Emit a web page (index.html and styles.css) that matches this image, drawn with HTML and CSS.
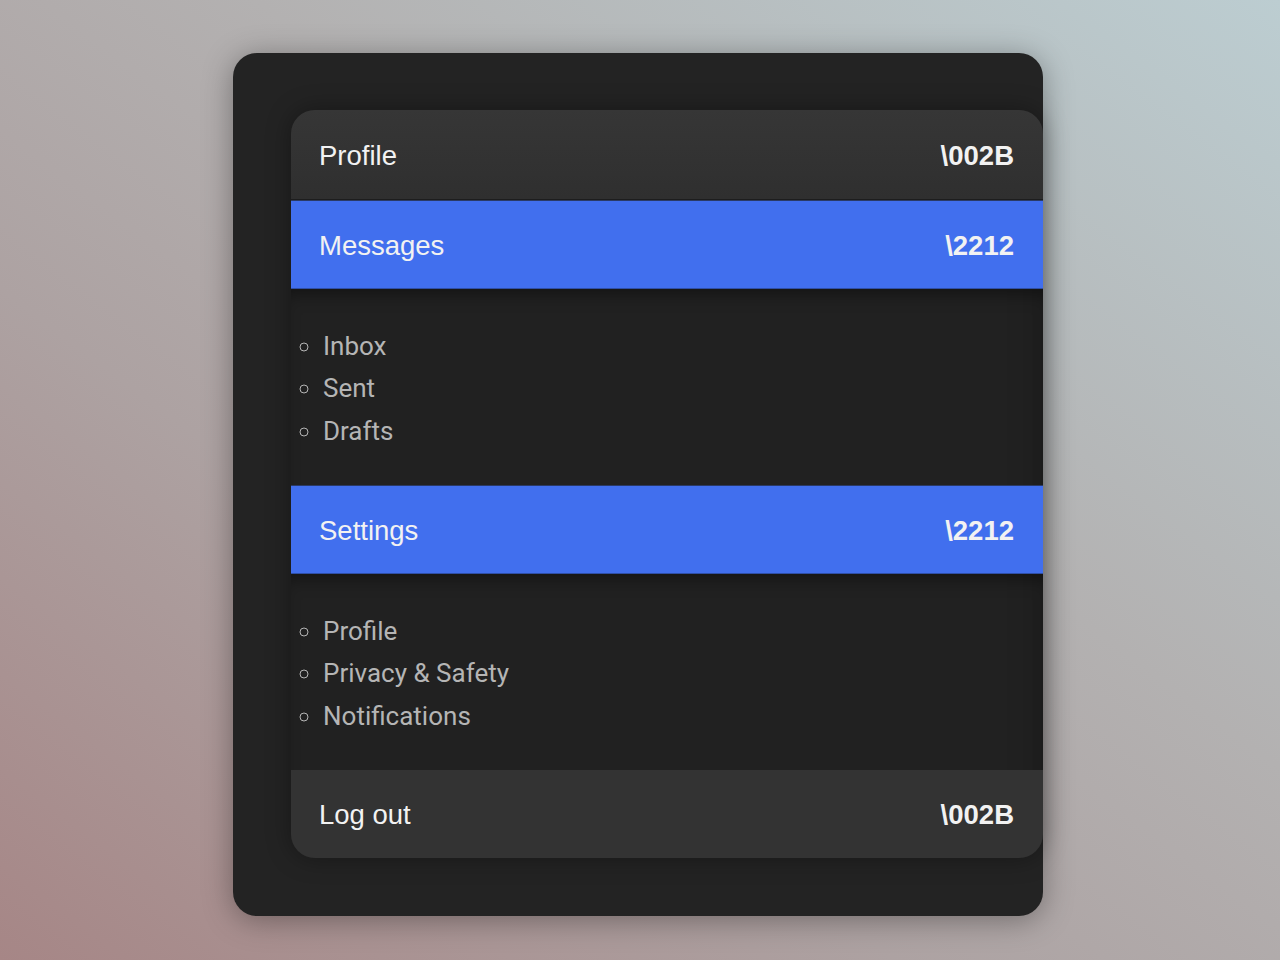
FILE: index.html
```html
<!DOCTYPE html>
<html lang="en">
<head>
    <meta charset="UTF-8">
    <meta name="viewport" content="width=device-width, initial-scale=1.0">
    <title>Accordion</title>
    <link rel="stylesheet" href="styles.css">
</head>
<body>
    <div class="card">
        <div class="accordion">
            <div class="accordion__item">
                <div class="accordion__header accordion__header--top">
                    <span>Profile</span>
                    <span class="accordion__mark">\002B</span>
                </div>
            </div>
            <div class="accordion__item">
                <div class="accordion__header accordion__header--open">
                    <span>Messages</span>
                    <span class="accordion__mark">\2212</span>
                </div>
                <ul class="accordion__content">
                    <li>Inbox</li>
                    <li>Sent</li>
                    <li>Drafts</li>
                </ul>
            </div>
            <div class="accordion__item">
                <div class="accordion__header accordion__header--open">
                    <span>Settings</span>
                    <span class="accordion__mark">\2212</span>
                </div>
                <ul class="accordion__content">
                    <li>Profile</li>
                    <li>Privacy &amp; Safety</li>
                    <li>Notifications</li>
                </ul>
            </div>
            <div class="accordion__item">
                <div class="accordion__header accordion__header--bottom">
                    <span>Log out</span>
                    <span class="accordion__mark">\002B</span>
                </div>
            </div>
        </div>
    </div>
</body>
</html>
```

FILE: styles.css
```css
html, body{
    height: 100%;
}
body{
    margin: 0;
    display: flex;
    justify-content: center;
    align-items: flex-start;
    background: linear-gradient(to top right, #a68686 0%, #ada2a2 35%, #b3b1b1 60%, #bccdd1 100%);
    font-family: "Liberation Sans", Arial, sans-serif;
}
.card{
    margin-top: 53px;
    margin-right: 4px;
    width: 810px;
    box-sizing: border-box;
    padding: 57px 0 58px 58px;
    background-color: #232323;
    border-radius: 24px;
    box-shadow: 0 4px 30px rgba(0,0,0,0.35);
}
.accordion{
    width: 752px;
    border-radius: 24px;
    overflow: hidden;
    box-shadow: 0 0 24px rgba(0,0,0,0.35);
}
.accordion__header{
    display: flex;
    justify-content: space-between;
    align-items: center;
    box-sizing: border-box;
    height: 90px;
    padding: 2px 29px 0 28px;
    border-bottom: 1px solid #1d1d1d;
    background: linear-gradient(to bottom, #363636, #2f2f2f);
    color: #f2f2f2;
    font-size: 27.5px;
}
.accordion__header--bottom{
    height: 88px;
    border-bottom: none;
    background: #333333;
}
.accordion__header--open{
    height: 89px;
    background: #416fee;
    border-bottom: 1px solid #2f4fa6;
    border-top: 1px solid #2a3a66;
}
.accordion__mark{
    font-weight: bold;
}
.accordion__content{
    margin: 0;
    padding: 35.5px 0 33px 32px;
    list-style: circle;
    background-color: #212121;
    box-shadow: inset 0 14px 18px -10px rgba(0,0,0,0.45), inset -58px 0 30px -50px rgba(0,0,0,0.15);
    color: #b5b5b5;
    font-family: Roboto, "Liberation Sans", sans-serif;
    font-size: 26px;
    line-height: 42.5px;
}
```
